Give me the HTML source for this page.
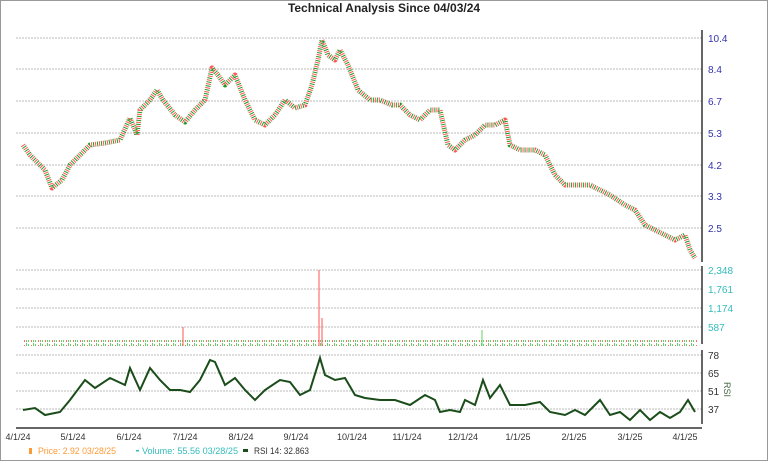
<!DOCTYPE html><html><head><style>
body{margin:0;width:768px;height:461px;background:#fff;overflow:hidden;font-family:"Liberation Sans",sans-serif}
</style></head><body>
<svg width="768" height="461" xmlns="http://www.w3.org/2000/svg" font-family="Liberation Sans, sans-serif">
<rect x="0.5" y="0.5" width="767" height="460" fill="none" stroke="#999"/>
<text x="384" y="12" font-size="12" font-weight="bold" text-anchor="middle" fill="#222">Technical Analysis Since 04/03/24</text>
<g stroke="#bbb" stroke-dasharray="2,1" stroke-width="1">
<line x1="16" x2="702" y1="38" y2="38"/><line x1="16" x2="702" y1="69" y2="69"/><line x1="16" x2="702" y1="101" y2="101"/><line x1="16" x2="702" y1="133" y2="133"/><line x1="16" x2="702" y1="165" y2="165"/><line x1="16" x2="702" y1="196" y2="196"/><line x1="16" x2="702" y1="228" y2="228"/>
<line x1="16" x2="702" y1="270" y2="270"/><line x1="16" x2="702" y1="289" y2="289"/><line x1="16" x2="702" y1="308" y2="308"/><line x1="16" x2="702" y1="327" y2="327"/>
<line x1="16" x2="702" y1="355" y2="355"/><line x1="16" x2="702" y1="373" y2="373"/><line x1="16" x2="702" y1="391" y2="391"/><line x1="16" x2="702" y1="409" y2="409"/>
</g>
<g stroke="#333" stroke-width="1.5"><line x1="702" y1="30" x2="702" y2="262"/><line x1="702" y1="266" x2="702" y2="344"/><line x1="702" y1="350" x2="702" y2="424"/><line x1="16" y1="428" x2="702" y2="428"/></g>
<g font-size="10" fill="#33a">
<text x="708" y="42">10.4</text><text x="708" y="73">8.4</text><text x="708" y="105">6.7</text><text x="708" y="137">5.3</text><text x="708" y="169">4.2</text><text x="708" y="200">3.3</text><text x="708" y="232">2.5</text></g>
<g font-size="10" fill="#3bb"><text x="708" y="274">2,348</text><text x="708" y="293">1,761</text><text x="708" y="312">1,174</text><text x="708" y="331">587</text></g>
<g font-size="10" fill="#333"><text x="708" y="359">78</text><text x="708" y="377">65</text><text x="708" y="395">51</text><text x="708" y="413">37</text>
<text x="0" y="0" transform="translate(724,382) rotate(90)" font-size="9" fill="#464">RSI</text></g>
<g fill="none" stroke-linejoin="round">
<polyline stroke="#f55" stroke-width="5" stroke-dasharray="1,3" points="23,145 30,155 45,170 52,188 62,180 70,165 80,155 90,145 105,143 120,140 130,118 137,135 140,110 150,100 157,90 163,100 175,115 185,122 195,110 205,100 212,68 218,75 225,85 235,75 245,100 255,120 265,125 275,115 285,100 295,108 305,105 312,85 318,60 322,40 328,55 335,60 340,50 348,65 358,90 370,100 380,100 392,105 400,105 410,115 420,120 430,110 440,110 448,145 455,150 465,140 475,135 485,125 495,125 505,120 510,145 520,150 535,150 545,155 555,175 565,185 575,185 590,185 600,190 610,195 625,205 635,210 645,225 655,230 665,235 675,240 685,235 690,250 695,258"/>
<polyline stroke="#292" stroke-width="5" stroke-dasharray="1,3" stroke-dashoffset="2" points="23,145 30,155 45,170 52,188 62,180 70,165 80,155 90,145 105,143 120,140 130,118 137,135 140,110 150,100 157,90 163,100 175,115 185,122 195,110 205,100 212,68 218,75 225,85 235,75 245,100 255,120 265,125 275,115 285,100 295,108 305,105 312,85 318,60 322,40 328,55 335,60 340,50 348,65 358,90 370,100 380,100 392,105 400,105 410,115 420,120 430,110 440,110 448,145 455,150 465,140 475,135 485,125 495,125 505,120 510,145 520,150 535,150 545,155 555,175 565,185 575,185 590,185 600,190 610,195 625,205 635,210 645,225 655,230 665,235 675,240 685,235 690,250 695,258"/>
</g>
<defs><pattern id="v" width="7" height="6" patternUnits="userSpaceOnUse"><rect x="0" y="2" width="1" height="4" fill="#6c6"/><rect x="3" y="3" width="1" height="3" fill="#f66"/><rect x="5" y="1" width="1" height="5" fill="#6c6"/></pattern></defs>
<rect x="22" y="340" width="675" height="6" fill="url(#v)"/>
<line x1="319" y1="270" x2="319" y2="346" stroke="#f55"/><line x1="322" y1="318" x2="322" y2="346" stroke="#f55"/><line x1="183" y1="327" x2="183" y2="346" stroke="#f55"/><line x1="482" y1="330" x2="482" y2="346" stroke="#6c6"/>
<polyline fill="none" stroke="#1a4d1a" stroke-width="2" points="23,410 35,408 45,415 60,412 70,400 85,380 95,388 110,378 125,385 130,368 140,390 150,368 160,380 170,390 180,390 190,392 200,380 210,360 215,362 225,385 235,378 245,390 255,400 265,390 280,380 290,382 300,395 310,390 320,358 325,375 335,380 345,378 355,395 365,398 380,400 395,400 410,405 425,395 435,400 440,412 450,410 460,412 465,400 475,405 483,380 490,398 500,385 510,405 525,405 540,402 550,412 565,415 575,410 585,415 600,400 610,415 620,412 630,420 640,410 650,420 660,412 670,418 680,412 688,400 695,412"/>
<g font-size="9" fill="#333" text-anchor="middle">
<text x="18" y="440">4/1/24</text><text x="73" y="440">5/1/24</text><text x="129" y="440">6/1/24</text><text x="185" y="440">7/1/24</text><text x="241" y="440">8/1/24</text><text x="296" y="440">9/1/24</text><text x="352" y="440">10/1/24</text><text x="407" y="440">11/1/24</text><text x="463" y="440">12/1/24</text><text x="518" y="440">1/1/25</text><text x="574" y="440">2/1/25</text><text x="630" y="440">3/1/25</text><text x="685" y="440">4/1/25</text></g>
<g font-size="9"><rect x="29" y="448" width="3" height="6" fill="#f93"/><text x="38" y="454" fill="#f93" textLength="78" lengthAdjust="spacingAndGlyphs">Price: 2.92  03/28/25</text>
<rect x="136" y="450" width="3" height="1.5" fill="#3bb"/><text x="142" y="454" fill="#3bb" textLength="96" lengthAdjust="spacingAndGlyphs">Volume: 55.56  03/28/25</text>
<rect x="243" y="449" width="5" height="3" fill="#1a4d1a"/><text x="254" y="454" fill="#333" textLength="55" lengthAdjust="spacingAndGlyphs">RSI 14: 32.863</text></g>
</svg>
</body></html>
